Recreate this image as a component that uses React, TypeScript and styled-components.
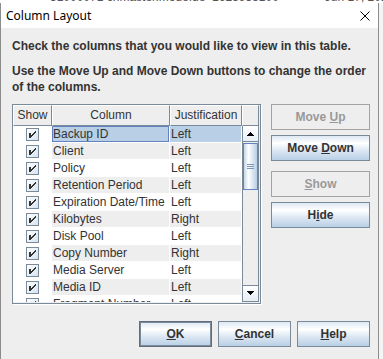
import React from 'react';
import styled, { createGlobalStyle } from 'styled-components';

const GlobalStyle = createGlobalStyle`
  html, body {
    margin: 0;
    padding: 0;
    background: #ffffff;
  }
  body {
    font-family: 'Liberation Sans', Arial, sans-serif;
  }
  * {
    box-sizing: border-box;
  }
`;

const Page = styled.div`
  width: 383px;
  height: 359px;
  overflow: hidden;
  background: #ffffff;
`;

const BackStrip = styled.div`
  height: 3px;
  overflow: hidden;
  display: flex;
  font: 12px/14px 'Liberation Sans', sans-serif;
  color: #555555;
`;

const BackText = styled.span<{ $left: number }>`
  margin-left: ${(p) => p.$left}px;
  margin-top: -10px;
  white-space: nowrap;
`;

const Frame = styled.div`
  display: flex;
  height: 356px;
`;

const Window = styled.div`
  width: 379px;
  flex: none;
  display: flex;
  flex-direction: column;
  border-left: 1px solid #8c8c8c;
  border-right: 1px solid #8c8c8c;
  background: #eeeeee;
`;

const Beyond = styled.div`
  flex: 1;
  background: #f4f4f4;
`;

const TitleBar = styled.div`
  height: 25px;
  flex: none;
  display: flex;
  align-items: center;
  justify-content: space-between;
  padding: 0 8px 0 5px;
  background: #ffffff;
  font: 12px 'Noto Sans', 'Open Sans', sans-serif;
  color: #000000;
`;

const Body = styled.div`
  padding: 10px 8px 0 11px;
  color: #333333;
`;

const Intro = styled.p`
  margin: 0 0 9px;
  font: bold 12px/16px 'Liberation Sans', Arial, sans-serif;
`;

const Main = styled.div`
  display: flex;
  justify-content: space-between;
  align-items: flex-start;
`;

const Pane = styled.div`
  width: 249px;
  height: 200px;
  display: grid;
  grid-template-columns: 229px 17px;
  grid-template-rows: 21px 176px;
  padding: 0 1px 1px 0;
  border: 1px solid #7a8a99;
  box-shadow: 1px 1px 0 #ffffff;
  background: #eeeeee;
`;

const TableGrid = styled.div`
  display: grid;
  grid-template-columns: 39px 118px 72px;
`;

const HeaderCell = styled.div`
  height: 21px;
  border-top: 1px solid #ffffff;
  border-left: 1px solid #ffffff;
  border-right: 1px solid #7a8a99;
  border-bottom: 1px solid #7a8a99;
  background: #eeeeee;
  text-align: center;
  font: 12px/19px 'Liberation Sans', Arial, sans-serif;
  white-space: nowrap;
  overflow: hidden;
`;

const Viewport = styled.div`
  height: 176px;
  overflow: hidden;
  background: #ffffff;
`;

const Cell = styled.div<{ $striped?: boolean; $selected?: boolean; $focused?: boolean }>`
  height: 17px;
  border-right: 1px solid #ffffff;
  border-bottom: 1px solid #ffffff;
  padding-left: 1px;
  background: ${(p) => (p.$selected ? '#b8cfe5' : p.$striped ? '#eeeeee' : '#ffffff')};
  box-shadow: ${(p) => (p.$focused ? 'inset 0 0 0 1px #6382bf' : 'none')};
  font: 12px/16px 'Liberation Sans', Arial, sans-serif;
  white-space: nowrap;
  overflow: hidden;
`;

const CheckCell = styled.div`
  height: 17px;
  display: flex;
  justify-content: center;
  align-items: flex-start;
  padding-top: 2px;
  border-right: 1px solid #ffffff;
  border-bottom: 1px solid #ffffff;
  background: #ffffff;
`;

const ScrollBar = styled.div`
  height: 176px;
  display: flex;
  flex-direction: column;
  border-left: 1px solid #7a8a99;
  border-right: 1px solid #7a8a99;
  border-bottom: 1px solid #7a8a99;
  background: #eeeeee;
`;

const ArrowButton = styled.div<{ $down?: boolean }>`
  height: 16px;
  flex: none;
  display: flex;
  align-items: center;
  justify-content: center;
  margin-top: ${(p) => (p.$down ? 'auto' : '0')};
  border-top: 1px solid ${(p) => (p.$down ? '#7a8a99' : '#ffffff')};
  border-bottom: 1px solid ${(p) => (p.$down ? '#eeeeee' : '#7a8a99')};
  background: linear-gradient(#ffffff, #e6eef6);
`;

const Thumb = styled.div`
  height: 47px;
  flex: none;
  margin-top: 1px;
  display: flex;
  align-items: center;
  justify-content: center;
  border: 1px solid #6382bf;
  background: linear-gradient(to right, #c5d6e8, #ffffff 35%, #dde8f3 65%, #b8cfe5);
`;

const Grip = styled.div`
  width: 7px;
  height: 5px;
  background: repeating-linear-gradient(#7b96bd 0 1px, transparent 1px 2px);
`;

const SideColumn = styled.div`
  width: 99px;
  display: flex;
  flex-direction: column;
  gap: 10px;
`;

const ButtonGroup = styled.div`
  display: flex;
  flex-direction: column;
  gap: 5px;
`;

const Button = styled.button<{ $width?: number; $default?: boolean }>`
  width: ${(p) => (p.$width ? `${p.$width}px` : '100%')};
  height: 26px;
  padding: 0;
  font: bold 12px 'Liberation Sans', Arial, sans-serif;
  color: #333333;
  border: 1px solid ${(p) => (p.$default ? '#5f6d7c' : '#7a8a99')};
  box-shadow: ${(p) => (p.$default ? 'inset 0 0 0 1px #7a8a99' : 'none')};
  background: linear-gradient(#dde8f3, #ffffff 30%, #dde8f3 60%, #b8cfe5);

  &:disabled {
    color: #999999;
    border-color: #a3a3a3;
    background: #eeeeee;
  }
`;

const Key = styled.span`
  text-decoration: underline;
  text-underline-offset: 1px;
`;

const Footer = styled.div`
  display: flex;
  justify-content: flex-end;
  gap: 6px;
  margin-top: 17px;
`;

const CloseIcon = () => (
  <svg width="10" height="10" viewBox="0 0 10 10">
    <path d="M0.5 0.5 L9.5 9.5 M9.5 0.5 L0.5 9.5" stroke="#000" strokeWidth="1" fill="none" />
  </svg>
);

const CheckBox = () => (
  <svg width="13" height="13" viewBox="0 0 13 13" shapeRendering="crispEdges">
    <defs>
      <linearGradient id="cbg" x1="0" y1="0" x2="1" y2="1">
        <stop offset="0" stopColor="#ffffff" />
        <stop offset="1" stopColor="#d6e2ef" />
      </linearGradient>
    </defs>
    <rect x="0.5" y="0.5" width="12" height="12" fill="url(#cbg)" stroke="#7a8a99" />
    <rect x="3" y="5" width="2" height="5" fill="#333333" />
    <rect x="9" y="3" width="1" height="2" fill="#333333" />
    <rect x="8" y="4" width="1" height="2" fill="#333333" />
    <rect x="7" y="5" width="1" height="2" fill="#333333" />
    <rect x="6" y="6" width="1" height="2" fill="#333333" />
    <rect x="5" y="7" width="1" height="2" fill="#333333" />
  </svg>
);

const Arrow = ({ down }: { down?: boolean }) => (
  <svg width="7" height="4" viewBox="0 0 7 4" shapeRendering="crispEdges">
    <path d={down ? 'M0 0 H7 L3.5 4 Z' : 'M3.5 0 L7 4 H0 Z'} fill="#000000" />
  </svg>
);

const rows = [
  { name: 'Backup ID', just: 'Left' },
  { name: 'Client', just: 'Left' },
  { name: 'Policy', just: 'Left' },
  { name: 'Retention Period', just: 'Left' },
  { name: 'Expiration Date/Time', just: 'Left' },
  { name: 'Kilobytes', just: 'Right' },
  { name: 'Disk Pool', just: 'Left' },
  { name: 'Copy Number', just: 'Right' },
  { name: 'Media Server', just: 'Left' },
  { name: 'Media ID', just: 'Left' },
  { name: 'Fragment Number', just: 'Left' },
];

const App = (): JSX.Element => (
  <Page>
    <GlobalStyle />
    <BackStrip>
      <BackText $left={50}>51000071 chmaster.mode.de_1623938100</BackText>
      <BackText $left={46}>Jun 17, 2021 1:55:00</BackText>
    </BackStrip>
    <Frame>
      <Window>
        <TitleBar>
          <span>Column Layout</span>
          <CloseIcon />
        </TitleBar>
        <Body>
          <Intro>Check the columns that you would like to view in this table.</Intro>
          <Intro>
            Use the Move Up and Move Down buttons to change the order
            <br />
            of the columns.
          </Intro>
          <Main>
            <Pane>
              <TableGrid>
                <HeaderCell>Show</HeaderCell>
                <HeaderCell>Column</HeaderCell>
                <HeaderCell>Justification</HeaderCell>
              </TableGrid>
              <HeaderCell />
              <Viewport>
                <TableGrid>
                  {rows.map((row, i) => (
                    <React.Fragment key={row.name}>
                      <CheckCell>
                        <CheckBox />
                      </CheckCell>
                      <Cell $striped={i % 2 === 1} $selected={i === 0} $focused={i === 0}>
                        {row.name}
                      </Cell>
                      <Cell $striped={i % 2 === 1} $selected={i === 0}>
                        {row.just}
                      </Cell>
                    </React.Fragment>
                  ))}
                </TableGrid>
              </Viewport>
              <ScrollBar>
                <ArrowButton>
                  <Arrow />
                </ArrowButton>
                <Thumb>
                  <Grip />
                </Thumb>
                <ArrowButton $down>
                  <Arrow down />
                </ArrowButton>
              </ScrollBar>
            </Pane>
            <SideColumn>
              <ButtonGroup>
                <Button disabled>
                  Move <Key>U</Key>p
                </Button>
                <Button>
                  Move <Key>D</Key>own
                </Button>
              </ButtonGroup>
              <ButtonGroup>
                <Button disabled>
                  <Key>S</Key>how
                </Button>
                <Button>
                  H<Key>i</Key>de
                </Button>
              </ButtonGroup>
            </SideColumn>
          </Main>
          <Footer>
            <Button $width={73} $default>
              <Key>O</Key>K
            </Button>
            <Button $width={73}>
              <Key>C</Key>ancel
            </Button>
            <Button $width={73}>
              <Key>H</Key>elp
            </Button>
          </Footer>
        </Body>
      </Window>
      <Beyond />
    </Frame>
  </Page>
);

export default App;
